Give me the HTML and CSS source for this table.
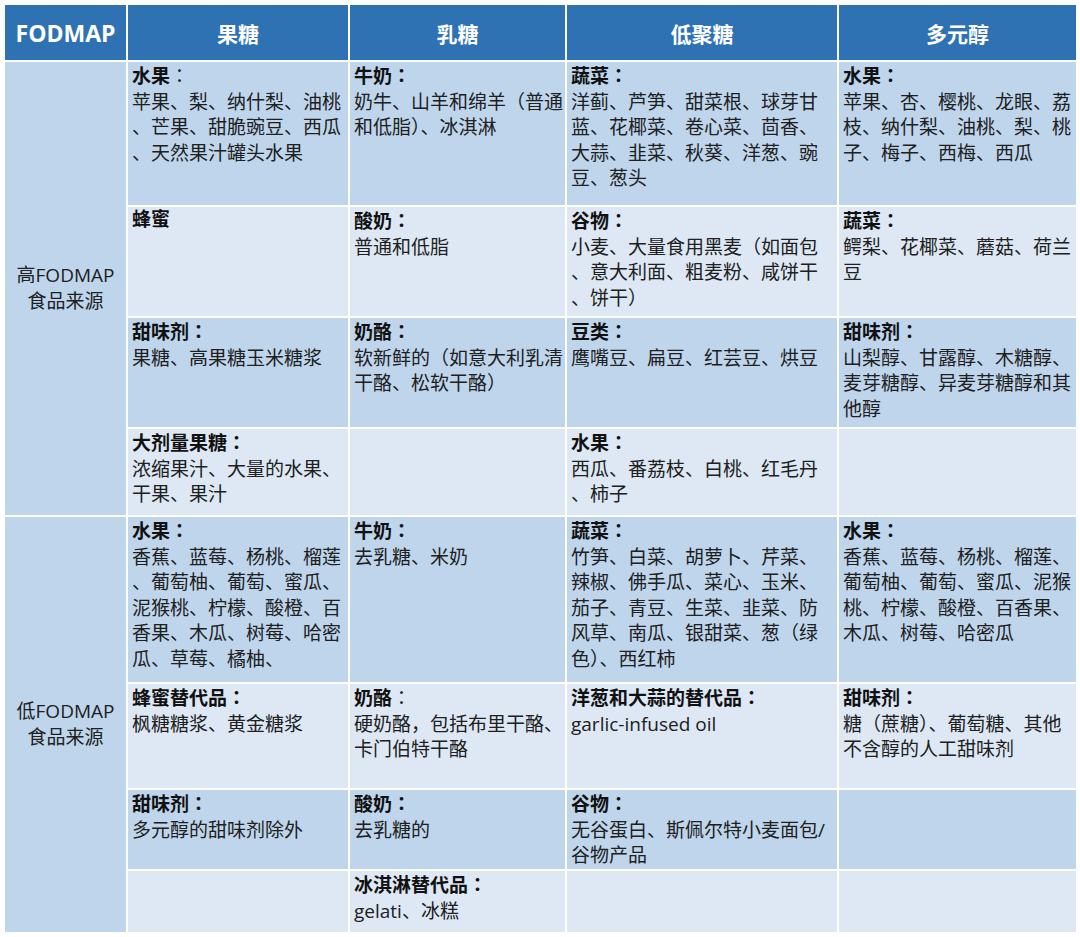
FILE: index.html
```html
<!DOCTYPE html>
<html lang="zh-CN">
<head>
<meta charset="utf-8">
<title>FODMAP</title>
<link rel="stylesheet" href="styles.css">
</head>
<body>
<table class="fod">
  <colgroup>
    <col class="c1"><col class="c2"><col class="c3"><col class="c4"><col class="c5">
  </colgroup>
  <thead>
    <tr class="hd">
      <th class="lat">FODMAP</th><th>果糖</th><th>乳糖</th><th>低聚糖</th><th>多元醇</th>
    </tr>
  </thead>
  <tbody>
    <tr class="r1 dark">
      <td class="grp" rowspan="4">高FODMAP<br>食品来源</td>
      <td><b>水果</b><span class="k">：</span><br>苹果、梨、纳什梨、油桃<br>、芒果、甜脆豌豆、西瓜<br>、天然果汁罐头水果</td>
      <td><b>牛奶<span class="k">：</span></b><br>奶牛、山羊和绵羊（普通<br>和低脂）、冰淇淋</td>
      <td><b>蔬菜<span class="k">：</span></b><br>洋蓟、芦笋、甜菜根、球芽甘<br>蓝、花椰菜、卷心菜、茴香、<br>大蒜、韭菜、秋葵、洋葱、豌<br>豆、葱头</td>
      <td><b>水果<span class="k">：</span></b><br>苹果、杏、樱桃、龙眼、荔<br>枝、纳什梨、油桃、梨、桃<br>子、梅子、西梅、西瓜</td>
    </tr>
    <tr class="r2 light">
      <td><b>蜂蜜</b></td>
      <td><b>酸奶<span class="k">：</span></b><br>普通和低脂</td>
      <td><b>谷物<span class="k">：</span></b><br>小麦、大量食用黑麦（如面包<br>、意大利面、粗麦粉、咸饼干<br>、饼干）</td>
      <td><b>蔬菜<span class="k">：</span></b><br>鳄梨、花椰菜、蘑菇、荷兰<br>豆</td>
    </tr>
    <tr class="r3 dark">
      <td><b>甜味剂<span class="k">：</span></b><br>果糖、高果糖玉米糖浆</td>
      <td><b>奶酪<span class="k">：</span></b><br>软新鲜的（如意大利乳清<br>干酪、松软干酪）</td>
      <td><b>豆类<span class="k">：</span></b><br>鹰嘴豆、扁豆、红芸豆、烘豆</td>
      <td><b>甜味剂<span class="k">：</span></b><br>山梨醇、甘露醇、木糖醇、<br>麦芽糖醇、异麦芽糖醇和其<br>他醇</td>
    </tr>
    <tr class="r4 light">
      <td><b>大剂量果糖<span class="k">：</span></b><br>浓缩果汁、大量的水果、<br>干果、果汁</td>
      <td></td>
      <td><b>水果<span class="k">：</span></b><br>西瓜、番荔枝、白桃、红毛丹<br>、柿子</td>
      <td></td>
    </tr>
    <tr class="r5 dark">
      <td class="grp" rowspan="4">低FODMAP<br>食品来源</td>
      <td><b>水果<span class="k">：</span></b><br>香蕉、蓝莓、杨桃、榴莲<br>、葡萄柚、葡萄、蜜瓜、<br>泥猴桃、柠檬、酸橙、百<br>香果、木瓜、树莓、哈密<br>瓜、草莓、橘柚、</td>
      <td><b>牛奶<span class="k">：</span></b><br>去乳糖、米奶</td>
      <td><b>蔬菜<span class="k">：</span></b><br>竹笋、白菜、胡萝卜、芹菜、<br>辣椒、佛手瓜、菜心、玉米、<br>茄子、青豆、生菜、韭菜、防<br>风草、南瓜、银甜菜、葱（绿<br>色）、西红柿</td>
      <td><b>水果<span class="k">：</span></b><br>香蕉、蓝莓、杨桃、榴莲、<br>葡萄柚、葡萄、蜜瓜、泥猴<br>桃、柠檬、酸橙、百香果、<br>木瓜、树莓、哈密瓜</td>
    </tr>
    <tr class="r6 light">
      <td><b>蜂蜜替代品<span class="k">：</span></b><br>枫糖糖浆、黄金糖浆</td>
      <td><b>奶酪</b><span class="k">：</span><br>硬奶酪，包括布里干酪、<br>卡门伯特干酪</td>
      <td><b>洋葱和大蒜的替代品<span class="k">：</span></b><br>garlic-infused oil</td>
      <td><b>甜味剂<span class="k">：</span></b><br>糖（蔗糖）、葡萄糖、其他<br>不含醇的人工甜味剂</td>
    </tr>
    <tr class="r7 dark">
      <td><b>甜味剂<span class="k">：</span></b><br>多元醇的甜味剂除外</td>
      <td><b>酸奶<span class="k">：</span></b><br>去乳糖的</td>
      <td><b>谷物<span class="k">：</span></b><br>无谷蛋白、斯佩尔特小麦面包/<br>谷物产品</td>
      <td></td>
    </tr>
    <tr class="r8 light">
      <td></td>
      <td><b>冰淇淋替代品<span class="k">：</span></b><br>gelati、冰糕</td>
      <td></td>
      <td></td>
    </tr>
  </tbody>
</table>
</body>
</html>
```
FILE: styles.css
```css
html, body {
  margin: 0;
  padding: 0;
  background: #ffffff;
}
body {
  font-family: "Open Sans", "Noto Sans CJK SC", sans-serif;
  color: #202020;
}
.fod {
  margin: 3px 0 0 3px;
  border-collapse: separate;
  border-spacing: 2px;
  table-layout: fixed;
  width: 1075px;
}
.c1 { width: 121px; }
.c2 { width: 220px; }
.c3 { width: 215px; }
.c4 { width: 270px; }
.c5 { width: 237px; }

.hd th {
  height: 55px;
  padding: 0;
  background: #2f72b4;
  color: #ffffff;
  font-size: 21px;
  font-weight: 700;
  text-align: center;
  vertical-align: middle;
}
.hd th.lat {
  font-size: 23px;
}
.fod td {
  padding: 0 4px;
  vertical-align: top;
  font-size: 19px;
  line-height: 25.5px;
  white-space: nowrap;
  overflow: hidden;
}
.fod td b {
  font-weight: 700;
  color: #111111;
}
.k {
  display: inline-block;
  width: 1em;
  text-align: center;
  font-family: "Noto Sans CJK TC", "Noto Sans CJK SC", sans-serif;
  font-feature-settings: "locl" 0;
  font-weight: 400;
}
.fod td b .k {
  font-weight: 700;
}
.dark td { background: #bed5ec; }
.light td { background: #dde8f4; }
.fod td.grp {
  background: #bed5ec;
  text-align: center;
  vertical-align: middle;
  font-size: 19px;
  padding: 0;
}
.r1 { height: 143px; }
.r2 { height: 109px; }
.r3 { height: 109px; }
.r4 { height: 86px; }
.r5 { height: 165px; }
.r6 { height: 104px; }
.r7 { height: 79px; }
.r8 { height: 61px; }
```
